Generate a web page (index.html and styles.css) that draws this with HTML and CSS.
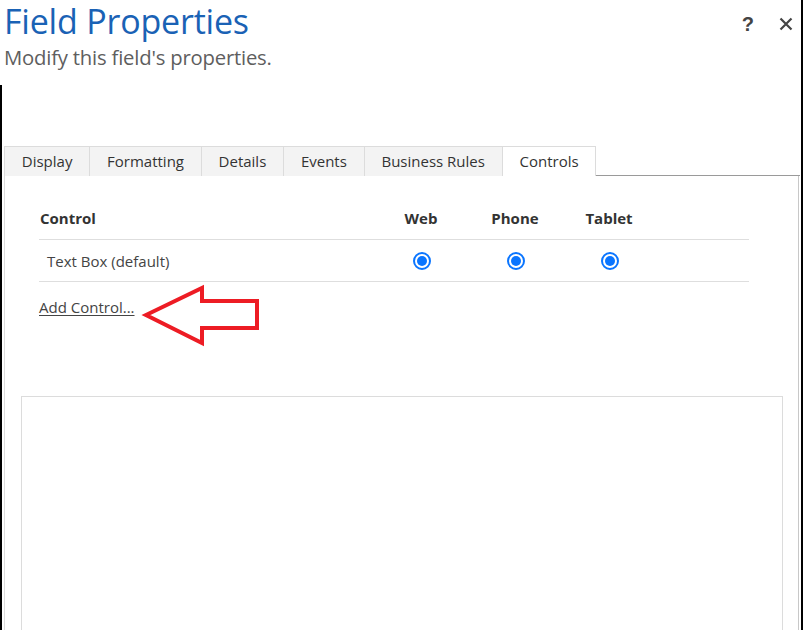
FILE: index.html
```html
<!DOCTYPE html>
<html lang="en">
<head>
<meta charset="utf-8">
<title>Field Properties</title>
<link rel="stylesheet" href="styles.css">
</head>
<body>
<div class="page">
  <header class="head">
    <div class="titles">
      <h1 class="title">Field Properties</h1>
      <p class="subtitle">Modify this field's properties.</p>
    </div>
    <div class="actions">
      <span class="help">?</span>
      <svg class="close" width="14" height="14" viewBox="0 0 14 14"><path d="M1.5 1.5 L12.5 12.5 M12.5 1.5 L1.5 12.5" stroke="#444" stroke-width="2.2" fill="none"/></svg>
    </div>
  </header>
  <div class="main">
    <div class="tabs">
      <div class="tab">Display</div>
      <div class="tab">Formatting</div>
      <div class="tab">Details</div>
      <div class="tab">Events</div>
      <div class="tab">Business Rules</div>
      <div class="tab active">Controls</div>
      <div class="tab-fill"></div>
    </div>
    <div class="panel">
      <div class="grid">
        <div class="th th-left">Control</div>
        <div class="th">Web</div>
        <div class="th">Phone</div>
        <div class="th">Tablet</div>
        <div class="th"></div>
        <div class="td td-left">Text Box (default)</div>
        <div class="td"><span class="radio"></span></div>
        <div class="td"><span class="radio"></span></div>
        <div class="td"><span class="radio"></span></div>
        <div class="td"></div>
      </div>
      <a class="add" href="#">Add Control...</a>
      <svg class="arrow" width="120" height="64" viewBox="0 0 120 64"><polygon points="5,32 61,5 61,18 116,18 116,45 61,45 61,60" fill="none" stroke="#ed1c24" stroke-width="4" stroke-linejoin="miter"/></svg>
      <div class="box"></div>
    </div>
  </div>
</div>
</body>
</html>
```
FILE: styles.css
```css
html, body {
  margin: 0;
  padding: 0;
  background: #fff;
}
body {
  font-family: "Open Sans", "Liberation Sans", sans-serif;
  color: #333;
  width: 803px;
  height: 630px;
  overflow: hidden;
}
.page {
  width: 801px;
  height: 630px;
  border-right: 2px solid #000;
  display: flex;
  flex-direction: column;
}
.head {
  flex: 0 0 85px;
  height: 85px;
  display: flex;
  justify-content: space-between;
  align-items: flex-start;
}
.titles {
  padding-left: 4px;
}
.title {
  margin: 0;
  padding-top: 1px;
  font-weight: 400;
  font-size: 34px;
  line-height: 40px;
  color: #1a62b5;
  letter-spacing: -0.2px;
}
.subtitle {
  margin: 0;
  padding-top: 3px;
  font-size: 20.3px;
  line-height: 26px;
  color: #5e5e5e;
  letter-spacing: -0.2px;
}
.actions {
  display: flex;
  align-items: center;
  gap: 25px;
  padding-top: 14px;
  padding-right: 8px;
}
.help {
  font-family: "Liberation Sans", sans-serif;
  font-weight: 700;
  font-size: 20px;
  line-height: 20px;
  color: #444;
}
.main {
  flex: 1 0 auto;
  border-left: 2px solid #000;
  padding-left: 2px;
  display: flex;
  flex-direction: column;
}
.tabs {
  margin-top: 61px;
  display: flex;
  height: 30px;
  flex-shrink: 0;
}
.tab {
  box-sizing: border-box;
  height: 30px;
  padding: 0 16.8px;
  background: #f3f3f3;
  border-top: 1px solid #dcdcdc;
  border-left: 1px solid #dcdcdc;
  font-size: 15px;
  line-height: 28px;
  color: #333;
  white-space: nowrap;
}
.tab.active {
  background: #fff;
  border-right: 1px solid #dcdcdc;
}
.tab-fill {
  flex: 1;
  border-bottom: 1px solid #9a9a9a;
  margin-right: 1px;
}
.panel {
  position: relative;
  flex: 1 0 auto;
  border-left: 1px solid #dcdcdc;
  border-right: 1px solid #c8c8c8;
  margin-right: 2px;
  padding-left: 34px;
  padding-top: 22px;
}
.grid {
  width: 710px;
  display: grid;
  grid-template-columns: 335px 94px 94px 94px 1fr;
}
.th, .td {
  box-sizing: border-box;
  height: 42px;
  border-bottom: 1px solid #dedede;
  display: flex;
  align-items: center;
  justify-content: center;
  font-size: 15px;
}
.th {
  font-weight: 700;
  color: #333;
  padding-bottom: 2px;
}
.th-left {
  justify-content: flex-start;
  padding-left: 1px;
}
.td-left {
  justify-content: flex-start;
  padding-left: 8px;
  color: #444;
}
.radio {
  box-sizing: border-box;
  width: 18px;
  height: 18px;
  border: 2px solid #0a75ff;
  border-radius: 50%;
  padding: 2px;
  display: block;
  margin-left: 1px;
}
.radio::after {
  content: "";
  display: block;
  width: 10px;
  height: 10px;
  border-radius: 50%;
  background: #0a75ff;
}
.add {
  display: inline-block;
  margin-top: 15px;
  font-size: 15px;
  line-height: 20px;
  color: #444;
  text-decoration: underline;
  text-underline-offset: 2px;
}
.arrow {
  position: absolute;
  left: 136px;
  top: 107px;
}
.box {
  margin-top: 78px;
  margin-left: -18px;
  width: 760px;
  height: 300px;
  border: 1px solid #dcdcdc;
}
```
